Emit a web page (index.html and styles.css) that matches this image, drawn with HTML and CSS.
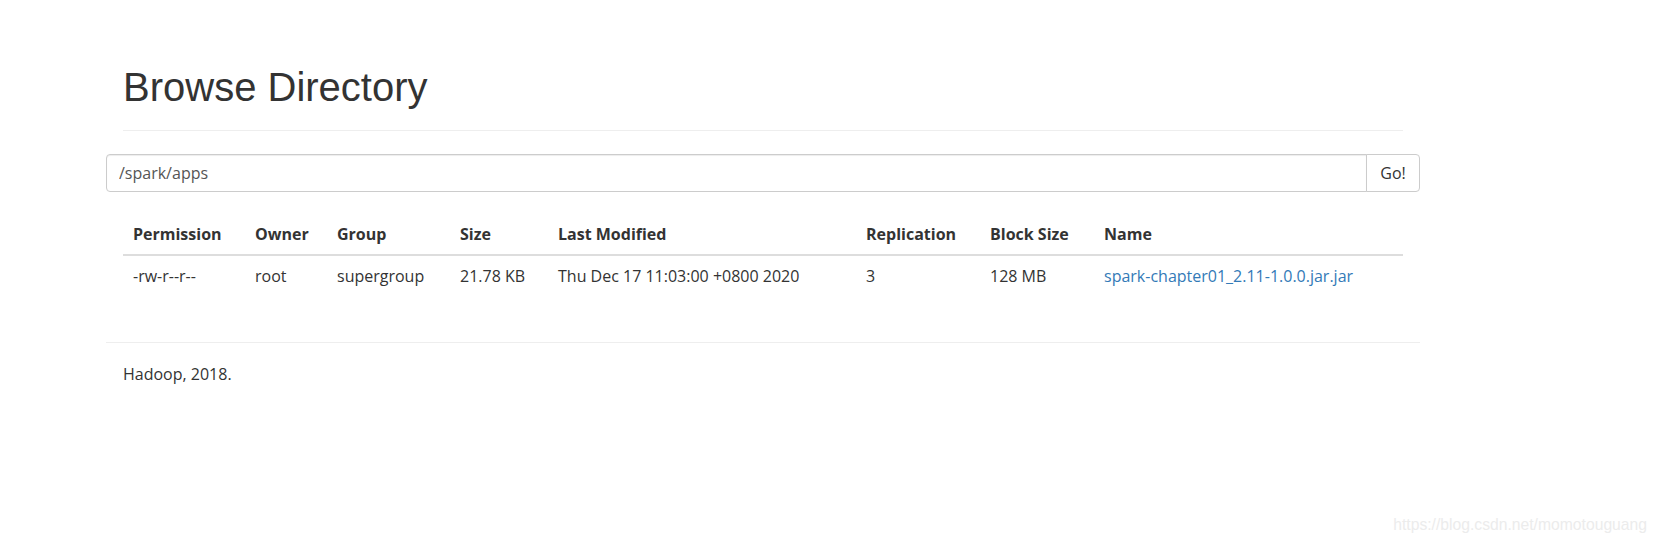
FILE: index.html
```html
<!DOCTYPE html>
<html>
<head>
<meta charset="utf-8">
<link rel="stylesheet" href="styles.css">
</head>
<body>
<div class="container">
  <div class="page-header">
    <h1>Browse Directory</h1>
  </div>
  <div class="input-group">
    <input class="form-control" type="text" value="/spark/apps">
    <button class="btn">Go!</button>
  </div>
  <table class="table">
    <colgroup>
      <col class="c-perm"><col class="c-owner"><col class="c-group"><col class="c-size"><col class="c-mod"><col class="c-rep"><col class="c-block"><col>
    </colgroup>
    <thead>
      <tr><th>Permission</th><th>Owner</th><th>Group</th><th>Size</th><th>Last Modified</th><th>Replication</th><th>Block Size</th><th>Name</th></tr>
    </thead>
    <tbody>
      <tr><td>-rw-r--r--</td><td>root</td><td>supergroup</td><td>21.78 KB</td><td>Thu Dec 17 11:03:00 +0800 2020</td><td>3</td><td>128 MB</td><td><a href="#">spark-chapter01_2.11-1.0.0.jar.jar</a></td></tr>
    </tbody>
  </table>
  <hr class="footer-rule">
  <div class="footer">Hadoop, 2018.</div>
</div>
<div class="watermark">https://blog.csdn.net/momotouguang</div>
</body>
</html>
```
FILE: styles.css
```css
html, body {
  margin: 0;
  padding: 0;
  background: #fff;
}
body {
  font-family: "Open Sans", "Noto Sans", sans-serif;
  font-size: 16px;
  line-height: 22px;
  color: #333;
}
.container {
  padding: 0 236px 0 106px;
}
.page-header {
  margin: 0 17px;
  padding-top: 65px;
  padding-bottom: 21px;
  border-bottom: 1px solid #eee;
}
h1 {
  margin: 0;
  font-family: "Liberation Sans", Arial, sans-serif;
  font-weight: 400;
  font-size: 40px;
  line-height: 44px;
  color: #333;
}
.input-group {
  display: flex;
  margin-top: 23px;
  height: 38px;
}
.form-control {
  flex: 1;
  min-width: 0;
  box-sizing: border-box;
  height: 38px;
  margin: 0;
  padding: 0 12px;
  border: 1px solid #ccc;
  border-radius: 4px 0 0 4px;
  font: inherit;
  color: #555;
  box-shadow: inset 0 1px 1px rgba(0,0,0,.075);
  outline: none;
}
.btn {
  box-sizing: border-box;
  width: 54px;
  height: 38px;
  margin: 0 0 0 -1px;
  padding: 0;
  border: 1px solid #ccc;
  border-radius: 0 4px 4px 0;
  background: #fff;
  font: inherit;
  color: #333;
}
.table {
  margin: 22px 17px 0;
  width: calc(100% - 34px);
  border-collapse: collapse;
  table-layout: fixed;
}
.c-perm { width: 122px; }
.c-owner { width: 82px; }
.c-group { width: 123px; }
.c-size { width: 98px; }
.c-mod { width: 308px; }
.c-rep { width: 124px; }
.c-block { width: 114px; }
.table th, .table td {
  text-align: left;
  padding: 9px 10px;
  white-space: nowrap;
}
.table th {
  font-weight: 700;
  border-bottom: 2.2px solid #ddd;
}
a {
  color: #337ab7;
  text-decoration: none;
}
.footer-rule {
  margin: 46px 0 0;
  border: 0;
  border-top: 1px solid #eee;
}
.footer {
  padding: 20px 17px 0;
}
.watermark {
  position: absolute;
  right: 9px;
  top: 516px;
  font-family: "Liberation Sans", Arial, sans-serif;
  font-size: 15.7px;
  line-height: 18px;
  color: #ececec;
}
```
